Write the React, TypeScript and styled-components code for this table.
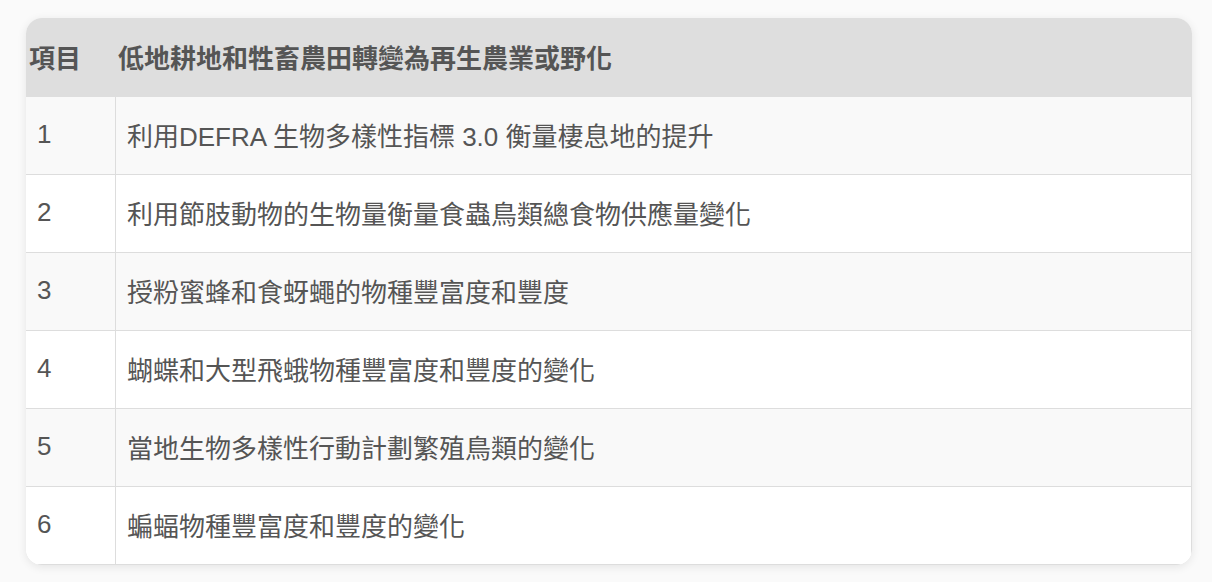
import styled, { createGlobalStyle } from 'styled-components';

const GlobalStyle = createGlobalStyle`
  html, body {
    margin: 0;
    padding: 0;
    background: #fafafa;
  }
  body {
    font-family: "Liberation Sans", "Noto Sans CJK TC", Arial, sans-serif;
    color: #555;
  }
`;

const Page = styled.div`
  padding: 18px 20px 19px 26px;
`;

const Card = styled.div`
  background: #fff;
  border-radius: 16px;
  overflow: hidden;
  box-shadow: 0 2px 10px rgba(0, 0, 0, 0.09);
`;

const Table = styled.table`
  width: 100%;
  border-collapse: separate;
  border-spacing: 0;
  table-layout: fixed;
`;

const HeadCell = styled.th<{ $narrow?: boolean }>`
  background: #dedede;
  height: 79px;
  padding: 0 0 3px ${(p) => (p.$narrow ? '3px' : '2px')};
  width: ${(p) => (p.$narrow ? '90px' : 'auto')};
  text-align: left;
  font-size: 26px;
  font-weight: bold;
  color: #555;
  box-sizing: border-box;
`;

const Row = styled.tr<{ $striped: boolean }>`
  background: ${(p) => (p.$striped ? '#f9f9f9' : '#fff')};
`;

const Cell = styled.td`
  height: 74px;
  padding: 0 0 3px 11px;
  font-size: 26px;
  color: #555;
  border-bottom: 1px solid #dddddd;
  border-right: 1px solid #dddddd;
  box-sizing: content-box;
  white-space: nowrap;
`;

const items = [
  '利用DEFRA 生物多樣性指標 3.0 衡量棲息地的提升',
  '利用節肢動物的生物量衡量食蟲鳥類總食物供應量變化',
  '授粉蜜蜂和食蚜蠅的物種豐富度和豐度',
  '蝴蝶和大型飛蛾物種豐富度和豐度的變化',
  '當地生物多樣性行動計劃繁殖鳥類的變化',
  '蝙蝠物種豐富度和豐度的變化',
];

export default function App() {
  return (
    <>
      <GlobalStyle />
      <Page>
        <Card>
          <Table>
            <thead>
              <tr>
                <HeadCell $narrow>項目</HeadCell>
                <HeadCell>低地耕地和牲畜農田轉變為再生農業或野化</HeadCell>
              </tr>
            </thead>
            <tbody>
              {items.map((text, i) => (
                <Row key={i} $striped={i % 2 === 0}>
                  <Cell>{i + 1}</Cell>
                  <Cell>{text}</Cell>
                </Row>
              ))}
            </tbody>
          </Table>
        </Card>
      </Page>
    </>
  );
}
